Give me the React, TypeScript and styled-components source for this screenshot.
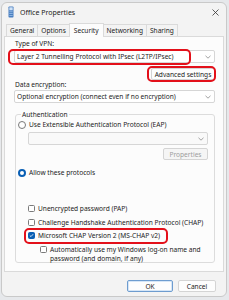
import React from "react";
import styled, { createGlobalStyle, css } from "styled-components";

const GlobalStyle = createGlobalStyle`
  html, body { margin: 0; padding: 0; }
  body {
    background: #e6e8eb;
    font-family: "Noto Sans", "Open Sans", "DejaVu Sans", sans-serif;
    font-size: 6.6px;
    color: #1b1b1b;
    width: 229px;
    height: 300px;
    overflow: hidden;
  }
`;

const Window = styled.div`
  box-sizing: border-box;
  margin: 2px 2px 0 1px;
  width: 226px;
  height: 295px;
  background: #f3f3f3;
  border: 1px solid #c9c9c9;
  border-radius: 6px;
  display: flex;
  flex-direction: column;
  overflow: hidden;
`;

const TitleBar = styled.div`
  height: 18px;
  display: flex;
  align-items: center;
  padding: 0 6px 0 6px;
  gap: 6px;
`;

const Title = styled.div`
  flex: 1;
  font-size: 7px;
  color: #1a1a1a;
`;

const Close = styled.div`
  width: 10px;
  display: flex;
  justify-content: center;
  color: #333;
`;

const TabStrip = styled.div`
  display: flex;
  align-items: flex-end;
  height: 15px;
  padding-left: 4px;
  position: relative;
  z-index: 1;
`;

const Tab = styled.div<{ $active?: boolean }>`
  box-sizing: border-box;
  height: 12px;
  padding: 0 3px;
  display: flex;
  align-items: center;
  border: 1px solid #dadada;
  border-bottom: none;
  margin-right: -1px;
  background: #f3f3f3;
  ${(p) =>
    p.$active &&
    css`
      height: 14px;
      background: #fcfcfc;
      padding: 0 4px;
      margin-bottom: -1px;
      position: relative;
      z-index: 2;
    `}
`;

const Panel = styled.div`
  box-sizing: border-box;
  margin: 0 2px 0 2px;
  height: 236px;
  background: #fcfcfc;
  border: 1px solid #dadada;
  padding: 2px 8px 0 9px;
  display: flex;
  flex-direction: column;
`;

const Label = styled.div<{ $top?: number }>`
  line-height: 9px;
  padding-left: 1px;
  margin-top: ${(p) => p.$top ?? 0}px;
`;

const Anchor = styled.div<{ $top?: number; $indent?: number; $end?: boolean }>`
  position: relative;
  margin-top: ${(p) => p.$top ?? 0}px;
  margin-left: ${(p) => p.$indent ?? 0}px;
  align-self: ${(p) => (p.$end ? "flex-end" : "stretch")};
`;

const SelectBox = styled.div<{ $disabled?: boolean }>`
  box-sizing: border-box;
  height: 13px;
  background: ${(p) => (p.$disabled ? "#f9f9f9" : "#ffffff")};
  border: 1px solid #d6d6d6;
  border-radius: 2px;
  display: flex;
  align-items: center;
  padding: 0 3px 0 2px;
  color: #1b1b1b;
`;

const SelectText = styled.span`
  flex: 1;
  white-space: nowrap;
  overflow: hidden;
`;

const Chevron = () => (
  <svg width="6" height="4" viewBox="0 0 6 4">
    <path d="M0.5 0.8 L3 3.2 L5.5 0.8" fill="none" stroke="#8a8a8a" strokeWidth="0.8" />
  </svg>
);

const Button = styled.div<{ $w: number; $primary?: boolean; $disabled?: boolean }>`
  box-sizing: border-box;
  width: ${(p) => p.$w}px;
  height: 12px;
  display: flex;
  align-items: center;
  justify-content: center;
  white-space: nowrap;
  background: ${(p) => (p.$disabled ? "#f5f5f5" : "#fdfdfd")};
  border: 1px solid ${(p) => (p.$primary ? "#6e9ccf" : "#d4d4d4")};
  border-radius: 2px;
  color: ${(p) => (p.$disabled ? "#9d9d9d" : "#1b1b1b")};
  ${(p) =>
    p.$primary &&
    css`
      box-shadow: inset 0 0 0 1px #d6e6f7;
    `}
`;

const Highlight = styled.div<{ $l: number; $t: number; $w: number; $h: number }>`
  position: absolute;
  left: ${(p) => p.$l}px;
  top: ${(p) => p.$t}px;
  width: ${(p) => p.$w}px;
  height: ${(p) => p.$h}px;
  box-sizing: border-box;
  border: 2px solid #e3101a;
  border-radius: 5px;
  pointer-events: none;
`;

const Group = styled.fieldset`
  box-sizing: border-box;
  margin: 7px 0 0 1px;
  padding: 0 6px 0 2px;
  border: 1px solid #dcdcdc;
  border-radius: 3px;
  height: 153px;
  display: flex;
  flex-direction: column;
`;

const Legend = styled.legend`
  padding: 0 1px;
  margin-left: 3px;
  line-height: 9px;
  color: #1b1b1b;
`;

const OptionRow = styled.div<{ $top?: number; $indent?: number }>`
  position: relative;
  display: flex;
  align-items: flex-start;
  gap: 3px;
  margin-top: ${(p) => p.$top ?? 0}px;
  margin-left: ${(p) => p.$indent ?? 0}px;
  line-height: 9px;
`;

const Radio = styled.span<{ $on?: boolean }>`
  box-sizing: border-box;
  flex: none;
  width: 8px;
  height: 8px;
  margin-top: 0.5px;
  border-radius: 50%;
  border: 1px solid #7a7a7a;
  background: #fff;
  ${(p) =>
    p.$on &&
    css`
      border: 2.2px solid #0a5fb4;
      background: #fff;
    `}
`;

const Check = styled.span<{ $on?: boolean }>`
  box-sizing: border-box;
  flex: none;
  width: 7px;
  height: 7px;
  margin-top: 1px;
  border-radius: 1.5px;
  border: 1px solid #7a7a7a;
  background: #fff;
  display: flex;
  align-items: center;
  justify-content: center;
  ${(p) =>
    p.$on &&
    css`
      border-color: #0a5fb4;
      background: #0a5fb4;
    `}
`;

const Tick = () => (
  <svg width="5" height="5" viewBox="0 0 5 5">
    <path d="M0.9 2.6 L2 3.6 L4.1 1.2" fill="none" stroke="#fff" strokeWidth="0.8" />
  </svg>
);

const Footer = styled.div`
  flex: 1;
  display: flex;
  justify-content: flex-end;
  align-items: flex-start;
  padding: 8px 10px 0 0;
  gap: 5px;
`;

const AppIcon = () => (
  <svg width="6" height="12" viewBox="0 0 6 12">
    <rect x="0.5" y="0.5" width="5" height="11" rx="0.8" fill="#4a7fc0" />
    <rect x="1.3" y="1.3" width="3.4" height="3" fill="#cfe2f7" />
    <rect x="1.3" y="5.4" width="3.4" height="0.8" fill="#9cc1ea" />
    <rect x="1.3" y="7.2" width="3.4" height="0.8" fill="#9cc1ea" />
    <rect x="1.3" y="9" width="3.4" height="0.8" fill="#9cc1ea" />
  </svg>
);

export default function App() {
  return (
    <>
      <GlobalStyle />
      <Window>
        <TitleBar>
          <AppIcon />
          <Title>Office Properties</Title>
          <Close>
            <svg width="7" height="7" viewBox="0 0 7 7">
              <path d="M0.5 0.5 L6.5 6.5 M6.5 0.5 L0.5 6.5" stroke="#333" strokeWidth="0.8" />
            </svg>
          </Close>
        </TitleBar>
        <TabStrip>
          <Tab>General</Tab>
          <Tab>Options</Tab>
          <Tab $active>Security</Tab>
          <Tab>Networking</Tab>
          <Tab>Sharing</Tab>
        </TabStrip>
        <Panel>
          <Label>Type of VPN:</Label>
          <Anchor $top={2}>
            <SelectBox>
              <SelectText>Layer 2 Tunnelling Protocol with IPsec (L2TP/IPsec)</SelectText>
              <Chevron />
            </SelectBox>
            <Highlight $l={-6} $t={-1} $w={183} $h={16} />
          </Anchor>
          <Anchor $top={5} $end>
            <Button $w={64}>Advanced settings</Button>
            <Highlight $l={-4} $t={-2} $w={69} $h={16} />
          </Anchor>
          <Label $top={0}>Data encryption:</Label>
          <Anchor $top={1}>
            <SelectBox>
              <SelectText>Optional encryption (connect even if no encryption)</SelectText>
              <Chevron />
            </SelectBox>
          </Anchor>
          <Group>
            <Legend>Authentication</Legend>
            <OptionRow $top={1}>
              <Radio />
              <span>Use Extensible Authentication Protocol (EAP)</span>
            </OptionRow>
            <Anchor $top={3} $indent={10}>
              <SelectBox $disabled>
                <SelectText />
                <Chevron />
              </SelectBox>
            </Anchor>
            <Anchor $top={3} $end>
              <Button $w={45} $disabled>
                Properties
              </Button>
            </Anchor>
            <OptionRow $top={8}>
              <Radio $on />
              <span>Allow these protocols</span>
            </OptionRow>
            <OptionRow $top={27} $indent={10}>
              <Check />
              <span>Unencrypted password (PAP)</span>
            </OptionRow>
            <OptionRow $top={5} $indent={10}>
              <Check />
              <span>Challenge Handshake Authentication Protocol (CHAP)</span>
            </OptionRow>
            <OptionRow $top={4} $indent={10}>
              <Check $on>
                <Tick />
              </Check>
              <span>Microsoft CHAP Version 2 (MS-CHAP v2)</span>
              <Highlight $l={-4} $t={-3} $w={144} $h={16} />
            </OptionRow>
            <OptionRow $top={5} $indent={22}>
              <Check />
              <span>
                Automatically use my Windows log-on name and
                <br />
                password (and domain, if any)
              </span>
            </OptionRow>
          </Group>
        </Panel>
        <Footer>
          <Button $w={46} $primary>
            OK
          </Button>
          <Button $w={38}>Cancel</Button>
        </Footer>
      </Window>
    </>
  );
}
